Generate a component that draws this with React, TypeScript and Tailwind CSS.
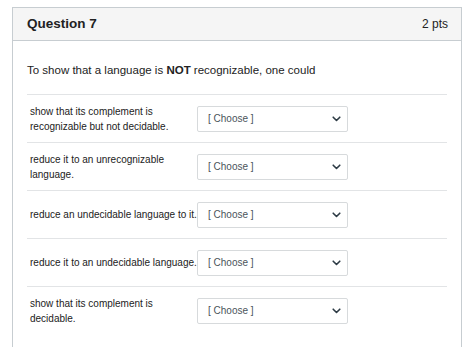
import React from "react";

const rows = [
  "show that its complement is recognizable but not decidable.",
  "reduce it to an unrecognizable language.",
  "reduce an undecidable language to it.",
  "reduce it to an undecidable language.",
  "show that its complement is decidable.",
];

const Chevron = () => (
  <svg width="9" height="6" viewBox="0 0 9 6" fill="none">
    <path d="M1.2 1.2 L4.5 4.5 L7.8 1.2" stroke="#2d3b45" strokeWidth="1.6" strokeLinecap="round" strokeLinejoin="round" />
  </svg>
);

const Row = ({ text }: { text: string }) => (
  <div className="flex items-center border-t border-[#e2e4e6] h-[48px] pl-[3px]">
    <div className="w-[167px] text-[10px] leading-[15px] text-[#222]">{text}</div>
    <div className="flex items-center justify-between w-[151px] h-[26px] border border-[#d7dadc] rounded-[2px] bg-white pl-[10px] pr-[6px]">
      <span className="text-[10px] text-[#4a545b]">[ Choose ]</span>
      <Chevron />
    </div>
  </div>
);

export default function App() {
  return (
    <div className="w-[474px] h-[347px] bg-white overflow-hidden pt-[7px] px-[12px] font-['Liberation_Sans',Arial,sans-serif]">
      <div className="border border-b-0 border-[#c7cdd1] h-[400px]">
        <div className="flex items-center justify-between h-[33px] bg-[#f5f5f5] border-b border-[#c7cdd1] pl-[14px] pr-[13px]">
          <h2 className="text-[13.5px] font-bold text-[#222]">Question 7</h2>
          <span className="text-[12px] text-[#222]">2 pts</span>
        </div>
        <div className="px-[14px]">
          <p className="text-[11.5px] text-[#222] pt-[21px] pb-[15px]">
            To show that a language is <b>NOT</b> recognizable, one could
          </p>
          {rows.map((r) => (
            <Row key={r} text={r} />
          ))}
        </div>
      </div>
    </div>
  );
}
